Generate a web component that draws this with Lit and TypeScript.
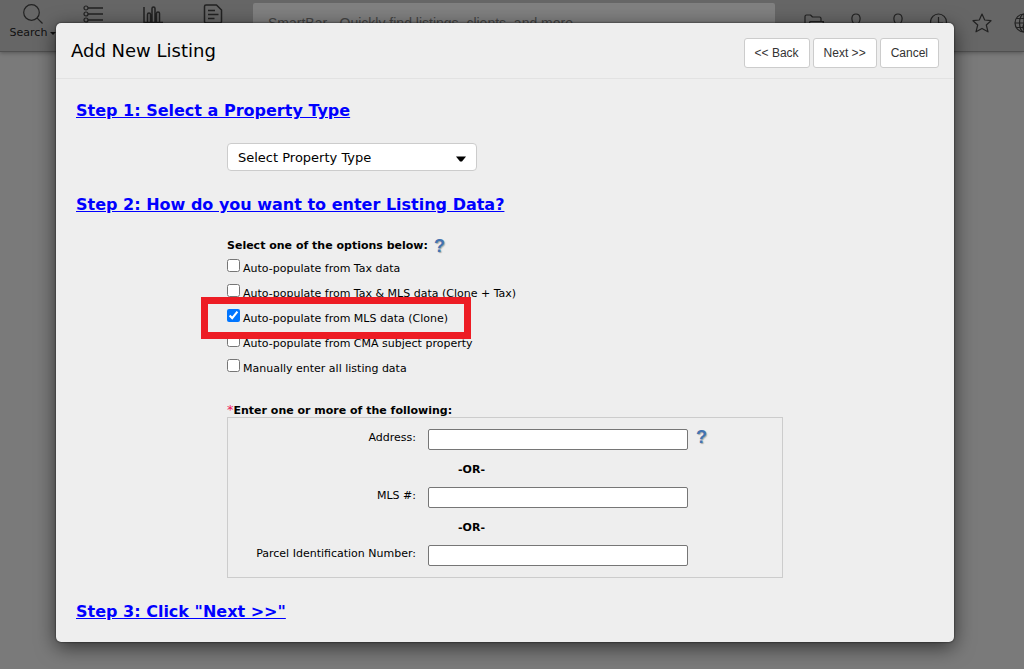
import { LitElement, html, css, svg } from "lit";
import { customElement, state } from "lit/decorators.js";

const stroke = (body: unknown, size = 20) => html`<svg class="icon" width=${size} height=${size} viewBox="0 0 20 20" aria-hidden="true">${body}</svg>`;

const icons = {
  search: stroke(svg`<circle cx="8.5" cy="8.5" r="7.8"/><path d="M14.2 14.2 19.5 19.5"/>`),
  list: stroke(svg`<circle cx="3" cy="4" r="2"/><circle cx="3" cy="10" r="2"/><circle cx="3" cy="16" r="2"/><path d="M5 4H20M5 10H20M5 16H20" stroke-width="1.500"/>`),
  chart: stroke(svg`<path d="M1 3V18.500H20M4.500 18V10.500q0-1.500 1.500-1.500t1.500 1.500V18M9 18V4.500q0-1.500 1.500-1.500t1.500 1.500V18M13.500 18V9.500q0-1.500 1.500-1.500t1.500 1.500V18" stroke-width="1.500"/>`),
  doc: stroke(svg`<path d="M3 1H13.500L18.500 6V17.500q0 1.500-1.500 1.500H3Q1.500 19 1.500 17.500V2.500Q1.500 1 3 1ZM5 6.500H12M5 10.500H15.500M5 14.500H11.500" stroke-width="1.500"/>`),
  folder: stroke(svg`<path d="M4.500 17.500H2Q1 17.500 1 16V3.500Q1 2 2.500 2H6.500L8.500 4H15.500Q17 4 17 5.500V8M3 17.500 6 8.500H19.500L17 17.500ZM8 11H16"/>`),
  person: stroke(svg`<path d="M6 4.500Q6.500 1 10 1T14 4.500Q14.500 8 12.500 10.500V14L18 17V19.500H2V17L7.500 14V10.500Q5.500 8 6 4.500Z"/>`),
  clock: stroke(svg`<circle cx="8.500" cy="9" r="8"/><path d="M8.500 4V10H13"/>`),
  star: stroke(svg`<path d="M10 1 12.700 7 19 7.700 14.300 12 16 18.800 10 15.400 4 18.800 5.700 12 1 7.700 7.300 7Z"/>`),
  globe: stroke(svg`<circle cx="10" cy="10" r="9"/><ellipse cx="10" cy="10" rx="4.500" ry="9"/><path d="M10 1V19M1 10H19M2.500 5.500H17.500M2.500 14.500H17.500"/><circle cx="13" cy="14" r="4" fill="#222"/>`),
};

@customElement("app-toolbar")
class AppToolbar extends LitElement {
  static styles = css`
    :host {
      display: flex;
      height: 52px;
      box-sizing: border-box;
      padding-left: 3px;
      background: #666;
      border-bottom: 1px solid #505050;
      box-shadow: 0 1px 4px rgba(0, 0, 0, 0.3);
      overflow: hidden;
    }
    .tools, .shortcuts { display: flex; flex: none; }
    .tool, .shortcut {
      display: flex;
      flex-direction: column;
      align-items: center;
      padding: 4px 0 0;
      border: 0;
      background: none;
      color: #111;
      font: 11px/18px "DejaVu Sans", Verdana, sans-serif;
    }
    .tool { width: 60px; }
    .shortcut { width: 42px; padding-top: 13px; }
    .caption { display: flex; align-items: center; gap: 3px; }
    .caret { border: 3px solid transparent; border-top-color: #111; border-bottom: 0; }
    .icon { flex: none; fill: none; stroke: #222; stroke-width: 1.2; stroke-linejoin: round; }
    .smartbar {
      flex: 1;
      min-width: 0;
      height: 40px;
      box-sizing: border-box;
      margin: 3px 18px 0 10px;
      padding: 0 15px;
      border: 0;
      border-radius: 2px;
      background: #808080;
      font: 14px "Liberation Sans", Arial, sans-serif;
      color: #222;
    }
    .smartbar::placeholder { color: #444; opacity: 1; }
    .shortcuts { margin-right: -21px; }
  `;

  render() {
    return html`
      <div class="tools">
        <button class="tool">${icons.search}<span class="caption">Search<span class="caret"></span></span></button>
        <button class="tool" aria-label="Lists">${icons.list}</button>
        <button class="tool" aria-label="Statistics">${icons.chart}</button>
        <button class="tool" aria-label="Documents">${icons.doc}</button>
      </div>
      <input class="smartbar" type="text" aria-label="SmartBar" placeholder="SmartBar - Quickly find listings, clients, and more" />
      <div class="shortcuts">
        <button class="shortcut" aria-label="Files">${icons.folder}</button>
        <button class="shortcut" aria-label="Contacts">${icons.person}</button>
        <button class="shortcut" aria-label="Profile">${icons.person}</button>
        <button class="shortcut" aria-label="Recent">${icons.clock}</button>
        <button class="shortcut" aria-label="Favorites">${icons.star}</button>
        <button class="shortcut" aria-label="Web">${icons.globe}</button>
      </div>`;
  }
}

@customElement("listing-dialog")
class ListingDialog extends LitElement {
  @state() selected = "mls";

  options = [
    { id: "tax", label: "Auto-populate from Tax data" },
    { id: "both", label: "Auto-populate from Tax & MLS data (Clone + Tax)" },
    { id: "mls", label: "Auto-populate from MLS data (Clone)" },
    { id: "cma", label: "Auto-populate from CMA subject property" },
    { id: "manual", label: "Manually enter all listing data" },
  ];

  static styles = css`
    :host {
      display: block;
      background: #eee;
      border-radius: 5px;
      box-shadow: 0 0 2px rgba(0, 0, 0, 0.8), 0 5px 20px rgba(0, 0, 0, 0.6);
      color: #000;
      font: 11px/20px "DejaVu Sans", Verdana, sans-serif;
    }
    .header {
      display: flex;
      align-items: flex-start;
      justify-content: space-between;
      padding: 15px 15px 10px;
      border-bottom: 1px solid #e2e2e2;
    }
    .title { margin: 0; font-size: 18px; line-height: 26px; font-weight: 400; }
    .actions { display: flex; gap: 3px; }
    .action {
      height: 30px;
      padding: 0 10px;
      border: 1px solid #ccc;
      border-radius: 3px;
      background: #fff;
      color: #333;
      font: 12px "Liberation Sans", Arial, sans-serif;
    }
    .body { padding: 20px 20px 18px; }
    .step { margin: 0; font-size: 16px; line-height: 24px; font-weight: 700; }
    .step a { color: #00f; text-decoration: underline; }
    .content { margin-left: 151px; }
    .picker { display: grid; width: 250px; margin-top: 20px; margin-bottom: 22px; align-items: center; }
    .select, .arrow { grid-area: 1 / 1; }
    .select {
      appearance: none;
      height: 28px;
      padding: 0 10px;
      border: 1px solid #ccc;
      border-radius: 4px;
      background: #fff;
      color: #000;
      font: 13px "DejaVu Sans", Verdana, sans-serif;
    }
    .arrow { justify-self: end; margin-right: 11px; margin-top: 3px; pointer-events: none; }
    .prompt { display: flex; align-items: center; gap: 6px; height: 20px; margin-top: 19px; font-weight: 700; }
    .help {
      padding: 0;
      border: 0;
      background: none;
      color: #4373b0;
      font: 700 18px/20px "Liberation Sans", Arial, sans-serif;
      text-shadow: 1px 1px 1px #aaa;
    }
    .option { position: relative; display: flex; align-items: flex-start; gap: 3px; width: max-content; height: 22px; padding-top: 3px; }
    .check { width: 13px; height: 13px; margin: 0; }
    .highlight {
      position: absolute;
      z-index: 1;
      inset: -9px -23px -8px -26px;
      border: 7px solid #ed1c24;
      pointer-events: none;
    }
    .group-title { margin-top: 23px; line-height: 12px; font-weight: 700; }
    .required { color: #f0145a; font-size: 13px; font-weight: 400; }
    .group {
      display: grid;
      grid-template-columns: 188px 260px auto;
      justify-content: start;
      column-gap: 12px;
      max-width: 554px;
      padding: 11px 0;
      border: 1px solid #ccc;
      margin-bottom: 22px;
    }
    .label { text-align: right; line-height: 18px; }
    .field { width: 260px; height: 21px; box-sizing: border-box; padding: 1px 4px; border: 1px solid #767676; border-radius: 2px; background: #fff; font: 12px "DejaVu Sans", Verdana, sans-serif; }
    .or { grid-column: 2 / 4; padding: 2px 0 0 30px; line-height: 35px; font-weight: 700; }
    .group .help { height: 16px; line-height: 16px; margin-left: -4px; }
  `;

  render() {
    return html`
      <div class="header">
        <h1 class="title">Add New Listing</h1>
        <div class="actions">
          <button class="action">&lt;&lt; Back</button>
          <button class="action">Next &gt;&gt;</button>
          <button class="action">Cancel</button>
        </div>
      </div>
      <div class="body">
        <h2 class="step"><a href="#type">Step 1: Select a Property Type</a></h2>
        <div class="content picker">
          <select class="select" id="type" aria-label="Property type"><option>Select Property Type</option></select>
          <svg class="arrow" width="10" height="6" viewBox="0 0 10 6" aria-hidden="true"><path d="M0 0.500H10L6 5.500H4Z"/></svg>
        </div>
        <h2 class="step"><a href="#data">Step 2: How do you want to enter Listing Data?</a></h2>
        <div class="content" id="data">
          <div class="prompt">Select one of the options below:<button class="help" aria-label="Help with options">?</button></div>
          <div class="options">
            ${this.options.map((o) => html`
              <label class="option">
                <input class="check" type="checkbox" .checked=${this.selected === o.id} @change=${() => (this.selected = o.id)} />
                <span>${o.label}</span>
                ${this.selected === o.id ? html`<span class="highlight"></span>` : ""}
              </label>`)}
          </div>
          <div class="group-title" id="criteria"><span class="required">*</span>Enter one or more of the following:</div>
          <div class="group" role="group" aria-labelledby="criteria">
            <label class="label" for="address">Address:</label>
            <input class="field" id="address" type="text" />
            <button class="help" aria-label="Help with address">?</button>
            <div class="or">-OR-</div>
            <label class="label" for="mls">MLS #:</label>
            <input class="field" id="mls" type="text" />
            <div class="or">-OR-</div>
            <label class="label" for="pin">Parcel Identification Number:</label>
            <input class="field" id="pin" type="text" />
          </div>
        </div>
        <h2 class="step"><a href="#next">Step 3: Click "Next &gt;&gt;"</a></h2>
      </div>`;
  }
}

@customElement("app-root")
class AppRoot extends LitElement {
  static styles = css`
    :host { display: block; position: relative; min-height: 100vh; background: #7a7a7a; overflow: hidden; }
    .dialog { position: absolute; top: 23px; left: 56px; right: 70px; }
  `;

  render() {
    return html`<app-toolbar></app-toolbar><listing-dialog class="dialog"></listing-dialog>`;
  }
}
